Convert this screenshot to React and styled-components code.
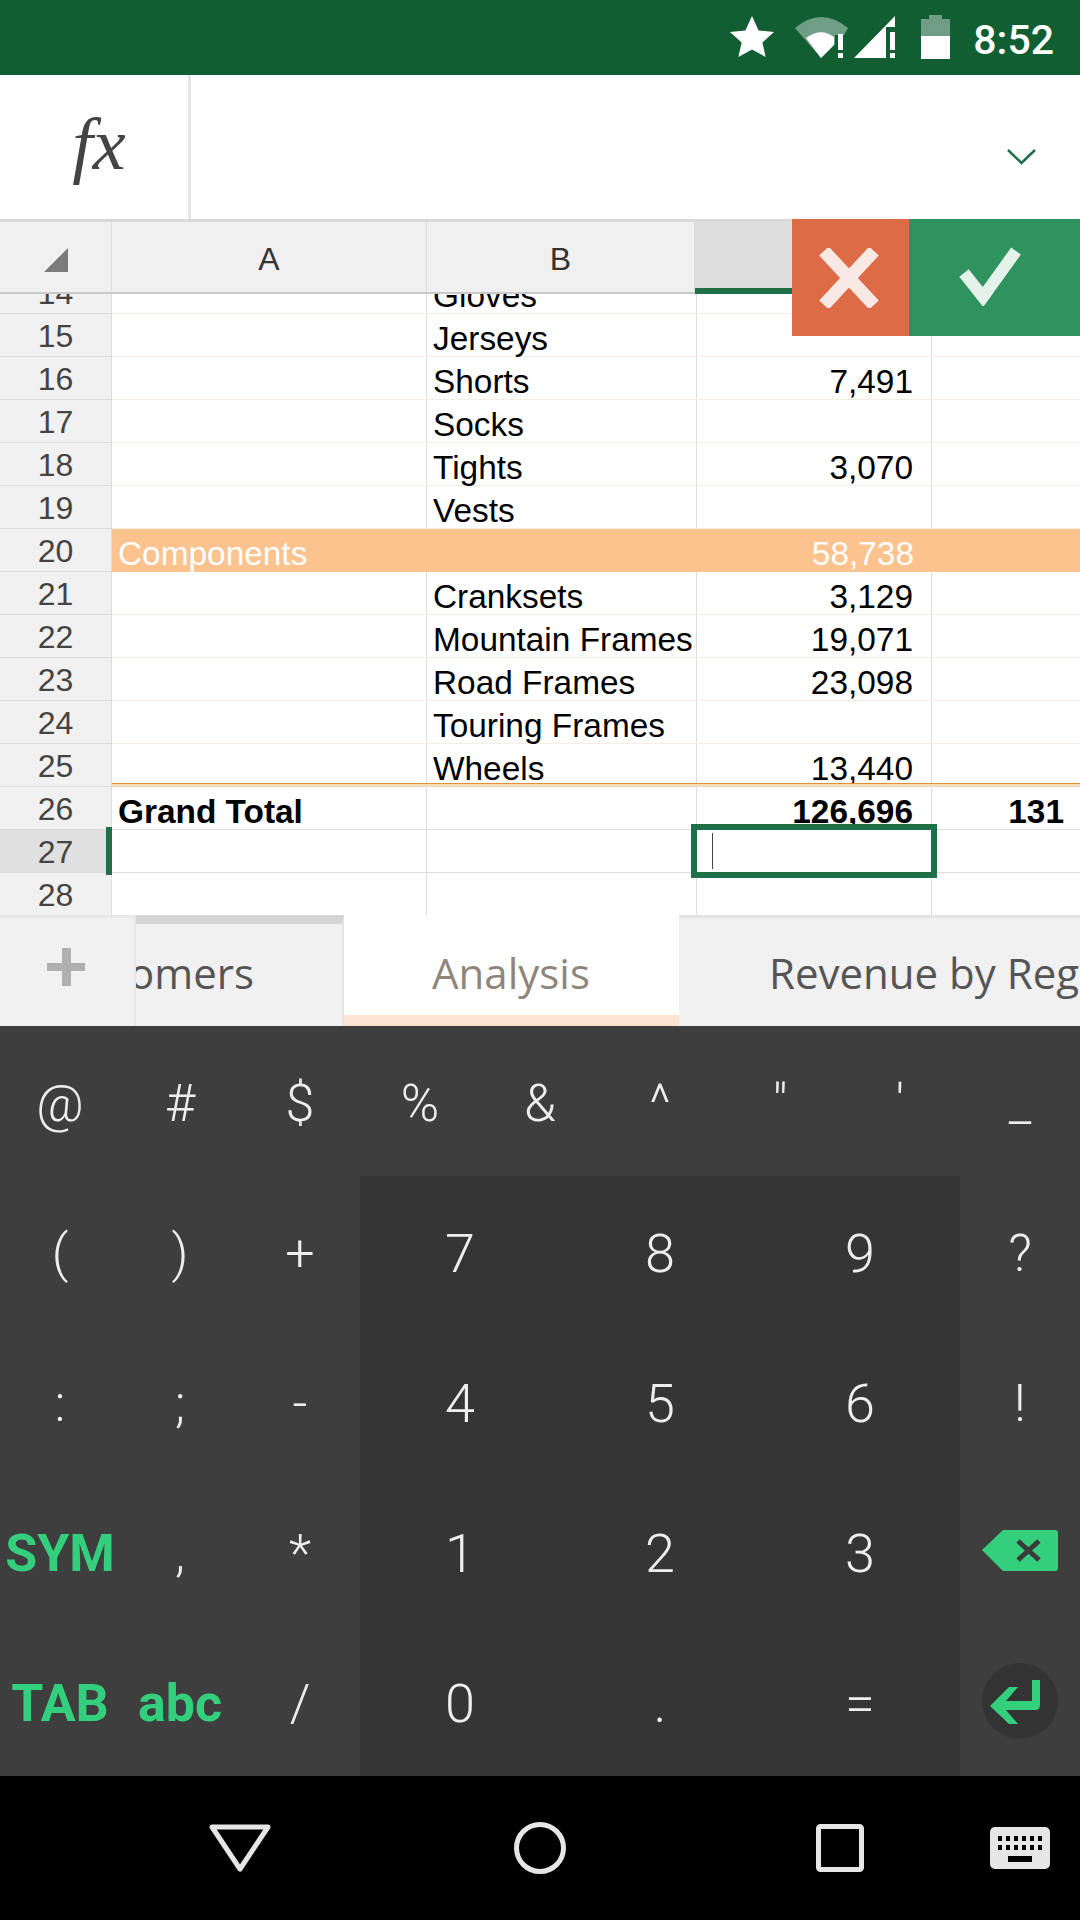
import React from 'react'
import styled, { createGlobalStyle } from 'styled-components'

const GREEN = '#1f6f49'
const KEY_GREEN = '#33cf7c'

const GlobalStyle = createGlobalStyle`
  html, body {
    margin: 0;
    padding: 0;
    background: #000;
  }
  * {
    box-sizing: border-box;
  }
`

const Screen = styled.div`
  width: 1080px;
  height: 1920px;
  display: flex;
  flex-direction: column;
  overflow: hidden;
  background: #fff;
  font-family: "Liberation Sans", Arial, sans-serif;
`

const StatusBar = styled.div`
  height: 75px;
  flex: none;
  background: #115e33;
  display: flex;
  justify-content: flex-end;
  align-items: flex-start;
  padding: 15px 26px 0 0;
`

const StatusIcon = styled.svg`
  display: block;
  flex: none;
  margin-left: ${(p) => p.$gap}px;
`

const Clock = styled.div`
  font-family: Roboto, sans-serif;
  font-size: 41px;
  font-weight: 500;
  line-height: 50px;
  color: #fff;
  margin-left: 23px;
`

const FormulaBar = styled.div`
  height: 147px;
  flex: none;
  display: flex;
  background: #fff;
  border-bottom: 3px solid #d9d9d9;
`

const FxBox = styled.div`
  width: 191px;
  flex: none;
  display: flex;
  align-items: center;
  justify-content: center;
  border-right: 3px solid #e6e6e6;
  font-family: "Liberation Serif", serif;
  font-style: italic;
  font-size: 74px;
  color: #444;
  padding: 0 0 6px 10px;
`

const FormulaInput = styled.div`
  flex: 1;
  display: flex;
  align-items: center;
  justify-content: flex-end;
  padding: 20px 44px 0 0;
`

const Sheet = styled.div`
  position: relative;
  flex: none;
  height: 693px;
  display: flex;
  flex-direction: column;
`

const HeaderRow = styled.div`
  height: 72px;
  flex: none;
  display: flex;
  background: #f0f0f0;
`

const CornerCell = styled.div`
  width: 112px;
  flex: none;
  display: flex;
  align-items: center;
  justify-content: center;
  border-right: 1px solid #ddd;
  border-bottom: 2px solid #c9c9c9;
  padding-top: 5px;
`

const ColHead = styled.div`
  width: ${(p) => p.$width}px;
  flex: ${(p) => (p.$grow ? 1 : 'none')};
  display: flex;
  align-items: center;
  justify-content: center;
  padding-top: 4px;
  font-size: 32px;
  color: #333;
  border-right: ${(p) => (p.$noLine ? 'none' : '1px solid #ddd')};
  border-bottom: ${(p) => (p.$active ? `6px solid ${GREEN}` : '2px solid #c9c9c9')};
  background: ${(p) => (p.$active ? '#dedede' : 'transparent')};
`

const GridBody = styled.div`
  position: relative;
  flex: 1;
  overflow: hidden;
`

const RowList = styled.div`
  margin-top: -23px;
`

const Row = styled.div`
  position: relative;
  height: 43px;
  display: flex;
  border-bottom: ${(p) => p.$line};
  background: ${(p) => p.$fill || '#fff'};
  color: ${(p) => p.$ink || '#000'};
  font-weight: ${(p) => (p.$bold ? 700 : 400)};

  ${(p) =>
    p.$total &&
    `
    &::after {
      content: '';
      position: absolute;
      left: 112px;
      right: 0;
      bottom: -2px;
      height: 3px;
      border-top: 1px solid #de9238;
      border-bottom: 1px solid #de9238;
      background: #f3dcbc;
    }
  `}
`

const RowNumber = styled.div`
  width: 112px;
  flex: none;
  height: 43px;
  background: ${(p) => (p.$active ? '#e0e0e0' : '#f1f1f1')};
  border-right: 1px solid #ddd;
  border-bottom: 1px solid #ddd;
  color: #444;
  font-size: 32px;
  font-weight: 400;
  line-height: 41px;
  padding-top: 2px;
  text-align: center;
`

const Cell = styled.div`
  width: ${(p) => p.$width}px;
  flex: ${(p) => (p.$grow ? 1 : 'none')};
  display: flex;
  align-items: flex-end;
  justify-content: ${(p) => (p.$right ? 'flex-end' : 'flex-start')};
  padding: 0 ${(p) => (p.$right ? p.$end : 0)}px 0 ${(p) => (p.$right ? 0 : 6)}px;
  border-right: ${(p) => (p.$plain ? 'none' : '1px solid #ddd')};
  font-size: 33.4px;
  line-height: 34px;
  white-space: nowrap;
`

const SelectionBox = styled.div`
  position: absolute;
  left: 691px;
  top: 530px;
  width: 246px;
  height: 54px;
  border: 6px solid ${GREEN};
  background: #fff;
`

const TextCursor = styled.div`
  position: absolute;
  left: 15px;
  top: 3px;
  width: 1px;
  height: 36px;
  background: #444;
`

const RowMarker = styled.div`
  position: absolute;
  left: 106px;
  top: 533px;
  width: 6px;
  height: 48px;
  background: ${GREEN};
`

const ActionButtons = styled.div`
  position: absolute;
  top: -3px;
  right: 0;
  display: flex;
  height: 117px;
`

const ActionButton = styled.div`
  width: ${(p) => p.$width}px;
  background: ${(p) => p.$color};
  display: flex;
  align-items: center;
  justify-content: center;
  padding: ${(p) => p.$pad};
`

const TabBar = styled.div`
  height: 111px;
  flex: none;
  display: flex;
  background: #f1f1f1;
`

const AddTab = styled.div`
  width: 136px;
  flex: none;
  background: #f1f1f1;
  border-right: 2px solid #e6e6e6;
  border-top: 3px solid #e8e8e8;
  display: flex;
  align-items: center;
  justify-content: center;
  padding: 0 2px 11px 0;
`

const SheetTab = styled.div`
  flex: ${(p) => (p.$grow ? 1 : 'none')};
  width: ${(p) => p.$width}px;
  min-width: 0;
  overflow: hidden;
  display: flex;
  align-items: center;
  justify-content: ${(p) => (p.$clipLeft ? 'flex-end' : 'flex-start')};
  padding: ${(p) => p.$pad};
  background: ${(p) => (p.$active ? '#fff' : '#f1f1f1')};
  border-top: ${(p) => (p.$band ? '9px solid #d5d5d5' : p.$active ? 'none' : '3px solid #e4e4e4')};
  border-right: ${(p) => (p.$active || p.$grow ? 'none' : '2px solid #e4e4e4')};
  border-bottom: ${(p) => (p.$active ? '11px solid #fde4d0' : 'none')};
  color: ${(p) => (p.$active ? '#8f857b' : '#555')};
  font-family: "Open Sans", sans-serif;
  font-size: 42px;
  white-space: nowrap;
`

const Keyboard = styled.div`
  height: 750px;
  flex: none;
  display: flex;
  flex-direction: column;
  background: #3e3e3e;
  font-family: Roboto, sans-serif;
  font-weight: 300;
  color: #eee;
`

const SymbolRow = styled.div`
  height: 150px;
  flex: none;
  display: grid;
  grid-template-columns: repeat(9, 120px);
`

const KeyArea = styled.div`
  flex: 1;
  display: grid;
  grid-template-columns: 360px 600px 120px;
`

const KeyGrid = styled.div`
  display: grid;
  grid-template-columns: repeat(${(p) => p.$cols}, 1fr);
  grid-auto-rows: 150px;
  background: ${(p) => (p.$dark ? '#353535' : 'transparent')};
`

const Key = styled.div`
  display: flex;
  align-items: center;
  justify-content: center;
  padding-top: 5px;
  font-size: ${(p) => (p.$digit ? 54 : 52)}px;
  line-height: 1;
  font-weight: ${(p) => (p.$action ? 700 : 300)};
  color: ${(p) => (p.$action ? KEY_GREEN : '#eee')};
`

const IconKey = styled.div`
  display: flex;
  align-items: center;
  justify-content: center;
`

const NavBar = styled.div`
  height: 144px;
  flex: none;
  background: #000;
  display: flex;
  align-items: center;
  padding-left: 90px;
`

const NavButton = styled.div`
  width: ${(p) => p.$width}px;
  flex: none;
  display: flex;
  justify-content: center;
`

const rows = [
  { n: 14, b: 'Gloves' },
  { n: 15, b: 'Jerseys' },
  { n: 16, b: 'Shorts', c: '7,491' },
  { n: 17, b: 'Socks' },
  { n: 18, b: 'Tights', c: '3,070' },
  { n: 19, b: 'Vests' },
  { n: 20, a: 'Components', c: '58,738', band: true },
  { n: 21, b: 'Cranksets', c: '3,129' },
  { n: 22, b: 'Mountain Frames', c: '19,071' },
  { n: 23, b: 'Road Frames', c: '23,098' },
  { n: 24, b: 'Touring Frames' },
  { n: 25, b: 'Wheels', c: '13,440', total: true },
  { n: 26, a: 'Grand Total', c: '126,696', d: '131', bold: true, plainLine: true },
  { n: 27, plainLine: true },
  { n: 28, plainLine: true },
]

const lineFor = (row) => {
  if (row.plainLine) return '1px solid #ddd'
  if (row.band) return '1px solid #fcc38f'
  return '1px solid #f6eee5'
}

const StatusIcons = () => (
  <>
    <StatusIcon width="44" height="42" viewBox="0 0 44 42" $gap={0}>
      <polygon fill="#fff" points="22,1 28.6,15.5 44,17 32.4,27.4 35.6,42 22,34.5 8.4,42 11.6,27.4 0,17 15.4,15.5" />
    </StatusIcon>
    <StatusIcon width="53" height="44" viewBox="0 0 53 44" $gap={21}>
      <path fill="#fff" fillOpacity="0.4" d="M0 13 Q26 -9 53 13 L49 20 H40 V29 L26 43 Z" />
      <path fill="#fff" d="M11 23 Q26 12 39 22 V30 L26 43 Z" />
      <rect fill="#fff" x="43" y="19" width="5" height="16" />
      <rect fill="#fff" x="43" y="38" width="5" height="5" />
    </StatusIcon>
    <StatusIcon width="41" height="44" viewBox="0 0 41 44" $gap={6}>
      <path fill="#fff" d="M0 43 L41 1 V12 H32 V43 Z" />
      <rect fill="#fff" x="36" y="17" width="5" height="18" />
      <rect fill="#fff" x="36" y="38" width="5" height="5" />
    </StatusIcon>
    <StatusIcon width="29" height="44" viewBox="0 0 29 44" $gap={26}>
      <path fill="#fff" fillOpacity="0.4" d="M8 0 H21 V4 H29 V21 H0 V4 H8 Z" />
      <rect fill="#fff" x="0" y="21" width="29" height="23" />
    </StatusIcon>
    <Clock>8:52</Clock>
  </>
)

const BackspaceIcon = () => (
  <svg width="76" height="42" viewBox="0 0 76 42">
    <path fill={KEY_GREEN} d="M21 0 H73 a3 3 0 0 1 3 3 V38 a3 3 0 0 1 -3 3 H21 L0 20 Z" />
    <path stroke="#3a3a3a" strokeWidth="5" d="M36 11 L57 30 M57 11 L36 30" />
  </svg>
)

const EnterIcon = () => (
  <svg width="76" height="76" viewBox="0 0 76 76">
    <circle cx="38" cy="38" r="38" fill="#333" />
    <path fill={KEY_GREEN} d="M50 17 H58 V42 Q58 47 53 47 H24 L36 61 H27 L8 43 L27 24 H36 L24 38 H50 Z" />
  </svg>
)

const App = () => (
  <Screen>
    <GlobalStyle />
    <StatusBar>
      <StatusIcons />
    </StatusBar>

    <FormulaBar>
      <FxBox>fx</FxBox>
      <FormulaInput>
        <svg width="29" height="16" viewBox="0 0 29 16">
          <path fill="none" stroke={GREEN} strokeWidth="2.5" d="M1 1 L14.5 14 L28 1" />
        </svg>
      </FormulaInput>
    </FormulaBar>

    <Sheet>
      <HeaderRow>
        <CornerCell>
          <svg width="24" height="24" viewBox="0 0 24 24">
            <polygon fill="#7b7b7b" points="24,0 24,24 0,24" />
          </svg>
        </CornerCell>
        <ColHead $width={315}>A</ColHead>
        <ColHead $width={268}>B</ColHead>
        <ColHead $width={237} $active>C</ColHead>
        <ColHead $grow $noLine />
      </HeaderRow>

      <GridBody>
        <RowList>
          {rows.map((row) => (
            <Row
              key={row.n}
              $line={lineFor(row)}
              $fill={row.band ? '#fcc38f' : undefined}
              $ink={row.band ? '#fff' : undefined}
              $bold={row.bold}
              $total={row.total}
            >
              <RowNumber $active={row.n === 27}>{row.n}</RowNumber>
              <Cell $width={315} $plain={row.band}>{row.a}</Cell>
              <Cell $width={270} $plain={row.band}>{row.b}</Cell>
              <Cell $width={235} $right $end={18} $plain={row.band}>{row.c}</Cell>
              <Cell $grow $right $end={16} $plain>{row.d}</Cell>
            </Row>
          ))}
        </RowList>
        <RowMarker />
        <SelectionBox>
          <TextCursor />
        </SelectionBox>
      </GridBody>

      <ActionButtons>
        <ActionButton $width={117} $color="#dd6b45" $pad="0 4px 0 0">
          <svg width="60" height="60" viewBox="0 0 60 60">
            <path stroke="#f9e9e4" strokeWidth="13" d="M5 3 L55 57 M55 3 L5 57" />
          </svg>
        </ActionButton>
        <ActionButton $width={171} $color="#2e935f" $pad="0 7px 3px 0">
          <svg width="64" height="60" viewBox="0 0 64 60">
            <path fill="none" stroke="#e5f2ea" strokeWidth="12" d="M5 27 L24 51 L57 5" />
          </svg>
        </ActionButton>
      </ActionButtons>
    </Sheet>

    <TabBar>
      <AddTab>
        <svg width="38" height="38" viewBox="0 0 38 38">
          <path fill="#b0b0b0" d="M15 0 H24 V15 H38 V23 H24 V38 H15 V23 H0 V15 H15 Z" />
        </svg>
      </AddTab>
      <SheetTab $width={208} $clipLeft $band $pad="0 88px 6px 0">Customers</SheetTab>
      <SheetTab $width={335} $active $pad="14px 0 0 88px">Analysis</SheetTab>
      <SheetTab $grow $pad="0 0 0 90px">Revenue by Region</SheetTab>
    </TabBar>

    <Keyboard>
      <SymbolRow>
        {['@', '#', '$', '%', '&', '^', '"', "'", '_'].map((k) => (
          <Key key={k}>{k}</Key>
        ))}
      </SymbolRow>
      <KeyArea>
        <KeyGrid $cols={3}>
          {['(', ')', '+', ':', ';', '-'].map((k) => (
            <Key key={k}>{k}</Key>
          ))}
          <Key $action>SYM</Key>
          <Key>,</Key>
          <Key>*</Key>
          <Key $action>TAB</Key>
          <Key $action>abc</Key>
          <Key>/</Key>
        </KeyGrid>
        <KeyGrid $cols={3} $dark>
          {['7', '8', '9', '4', '5', '6', '1', '2', '3', '0', '.', '='].map((k) => (
            <Key key={k} $digit>{k}</Key>
          ))}
        </KeyGrid>
        <KeyGrid $cols={1}>
          <Key>?</Key>
          <Key>!</Key>
          <IconKey><BackspaceIcon /></IconKey>
          <IconKey><EnterIcon /></IconKey>
        </KeyGrid>
      </KeyArea>
    </Keyboard>

    <NavBar>
      <NavButton $width={300}>
        <svg width="62" height="48" viewBox="0 0 62 48">
          <path fill="none" stroke="#e6e6e6" strokeWidth="5" strokeLinejoin="round" d="M3 3 H59 L31 45 Z" />
        </svg>
      </NavButton>
      <NavButton $width={300}>
        <svg width="52" height="52" viewBox="0 0 52 52">
          <circle cx="26" cy="26" r="23.5" fill="none" stroke="#e6e6e6" strokeWidth="5" />
        </svg>
      </NavButton>
      <NavButton $width={300}>
        <svg width="48" height="48" viewBox="0 0 48 48">
          <rect x="2.5" y="2.5" width="43" height="43" rx="2" fill="none" stroke="#e6e6e6" strokeWidth="5" />
        </svg>
      </NavButton>
      <NavButton $width={60}>
        <svg width="60" height="42" viewBox="0 0 60 42">
          <rect width="60" height="42" rx="5" fill="#e6e6e6" />
          <path
            fill="#000"
            d="M8 9h4v5H8z M16 9h4v5h-4z M24 9h4v5h-4z M32 9h4v5h-4z M40 9h4v5h-4z M48 9h4v5h-4z M8 18h4v5H8z M16 18h4v5h-4z M24 18h4v5h-4z M32 18h4v5h-4z M40 18h4v5h-4z M48 18h4v5h-4z M18 29h24v6H18z"
          />
        </svg>
      </NavButton>
    </NavBar>
  </Screen>
)

export default App
